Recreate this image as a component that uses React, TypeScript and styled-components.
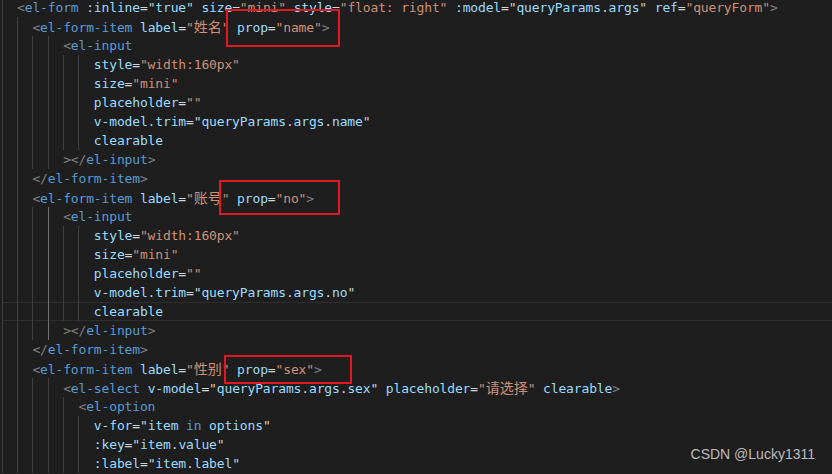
import React from "react";
import styled, { createGlobalStyle } from "styled-components";

const CH = 7.68;

const Global = createGlobalStyle`
  html, body { margin: 0; padding: 0; background: #1e1e1e; }
  body { width: 832px; height: 474px; overflow: hidden; }
  #root { width: 832px; height: 474px; }
`;

const Editor = styled.div`
  position: relative;
  width: 832px;
  height: 474px;
  overflow: hidden;
  background: #1e1e1e;
`;

const Lines = styled.div`
  display: flex;
  flex-direction: column;
  margin-top: -2px;
  padding-left: 1.7px;
`;

const Row = styled.div<{ $current?: boolean }>`
  display: flex;
  height: 19px;
  line-height: 19px;
  white-space: pre;
  box-shadow: ${(p) =>
    p.$current ? "inset 0 1px #2e2e2e, inset 0 -1px #2e2e2e" : "none"};
`;

const Guide = styled.span<{ $active?: boolean }>`
  display: inline-block;
  flex: none;
  width: ${CH * 2}px;
  height: 19px;
  box-sizing: border-box;
  border-left: 1px solid ${(p) => (p.$active ? "#707070" : "#404040")};
`;

const Code = styled.span`
  font-family: "DejaVu Sans Mono", "Liberation Mono", monospace;
  font-size: 13px;
  letter-spacing: -0.146px;
  color: #d4d4d4;
`;

const palette: Record<string, string> = {
  b: "#808080",
  t: "#569cd6",
  a: "#9cdcfe",
  e: "#d4d4d4",
  s: "#ce9178",
  v: "#9cdcfe",
  k: "#569cd6",
  p: "#d4d4d4",
  c: "#ce9178",
};

const Tok = styled.span<{ $k: string }>`
  color: ${(p) => palette[p.$k]};
`;

const Cjk = styled.span`
  font-family: "Noto Sans CJK SC", sans-serif;
  font-size: 14px;
  letter-spacing: 0;
  color: #ce9178;
`;

const Box = styled.div`
  position: absolute;
  box-sizing: border-box;
  border: 2px solid #e3171f;
`;

const Watermark = styled.div`
  position: absolute;
  right: 17px;
  top: 446px;
  font-family: "Liberation Sans", Arial, sans-serif;
  font-size: 14px;
  color: #bcbcbc;
  white-space: nowrap;
`;

type T = [string, string];
type Line = { indent: number; toks: T[]; active?: number; current?: boolean };

const sp: T = ["p", " "];
const open = (tag: string): T[] => [["b", "<"], ["t", tag]];
const attrS = (n: string, v: string): T[] => [["a", n], ["e", "="], ["s", `"${v}"`]];
const attrCjk = (n: string, v: string): T[] => [["a", n], ["e", "="], ["s", '"'], ["c", v], ["s", '"']];
const attrV = (n: string, parts: T[]): T[] => [["a", n], ["e", "="], ["p", '"'], ...parts, ["p", '"']];
const path = (...names: string[]): T[] => {
  const out: T[] = [];
  names.forEach((n, i) => {
    if (i) out.push(["p", "."]);
    out.push(["v", n]);
  });
  return out;
};

const inputBlock = (field: string, activeFrom: boolean): Line[] => {
  const act = activeFrom ? 3 : undefined;
  return [
    { indent: 8, toks: open("el-input"), active: act },
    { indent: 12, toks: attrS("style", "width:160px"), active: act },
    { indent: 12, toks: attrS("size", "mini"), active: act },
    { indent: 12, toks: attrS("placeholder", ""), active: act },
    { indent: 12, toks: attrV("v-model.trim", path("queryParams", "args", field)), active: act },
    { indent: 12, toks: [["a", "clearable"]], active: act, current: activeFrom },
    { indent: 8, toks: [["b", "></"], ["t", "el-input"], ["b", ">"]], active: act },
  ];
};

const closeItem: Line = { indent: 4, toks: [["b", "</"], ["t", "el-form-item"], ["b", ">"]] };

const lines: Line[] = [
  {
    indent: 2,
    toks: [
      ...open("el-form"), sp,
      ...attrV(":inline", [["v", "true"]]), sp,
      ...attrS("size", "mini"), sp,
      ...attrS("style", "float: right"), sp,
      ...attrV(":model", path("queryParams", "args")), sp,
      ...attrS("ref", "queryForm"),
      ["b", ">"],
    ],
  },
  { indent: 4, toks: [...open("el-form-item"), sp, ...attrCjk("label", "姓名"), sp, ...attrS("prop", "name"), ["b", ">"]] },
  ...inputBlock("name", false),
  closeItem,
  { indent: 4, toks: [...open("el-form-item"), sp, ...attrCjk("label", "账号"), sp, ...attrS("prop", "no"), ["b", ">"]] },
  ...inputBlock("no", true),
  closeItem,
  { indent: 4, toks: [...open("el-form-item"), sp, ...attrCjk("label", "性别"), sp, ...attrS("prop", "sex"), ["b", ">"]] },
  {
    indent: 8,
    toks: [
      ...open("el-select"), sp,
      ...attrV("v-model", path("queryParams", "args", "sex")), sp,
      ...attrCjk("placeholder", "请选择"), sp,
      ["a", "clearable"], ["b", ">"],
    ],
  },
  { indent: 10, toks: open("el-option") },
  { indent: 12, toks: attrV("v-for", [["v", "item"], ["p", " "], ["k", "in"], ["p", " "], ["v", "options"]]) },
  { indent: 12, toks: attrV(":key", path("item", "value")) },
  { indent: 12, toks: attrV(":label", path("item", "label")) },
];

const boxes = [
  { x: 226, y: 9, w: 114, h: 38 },
  { x: 219, y: 180, w: 121, h: 35 },
  { x: 224, y: 355, w: 128, h: 29 },
];

export default function App() {
  return (
    <Editor>
      <Global />
      <Lines>
        {lines.map((ln, i) => (
          <Row key={i} $current={ln.current}>
            {Array.from({ length: ln.indent / 2 }).map((_, g) => (
              <Guide key={g} $active={ln.active === g} />
            ))}
            <Code>
              {ln.toks.map(([k, txt], j) =>
                k === "c" ? (
                  <Cjk key={j}>{txt}</Cjk>
                ) : (
                  <Tok key={j} $k={k}>
                    {txt}
                  </Tok>
                )
              )}
            </Code>
          </Row>
        ))}
      </Lines>
      {boxes.map((b, i) => (
        <Box key={i} style={{ left: b.x, top: b.y, width: b.w, height: b.h }} />
      ))}
      <Watermark>CSDN @Lucky1311</Watermark>
    </Editor>
  );
}
